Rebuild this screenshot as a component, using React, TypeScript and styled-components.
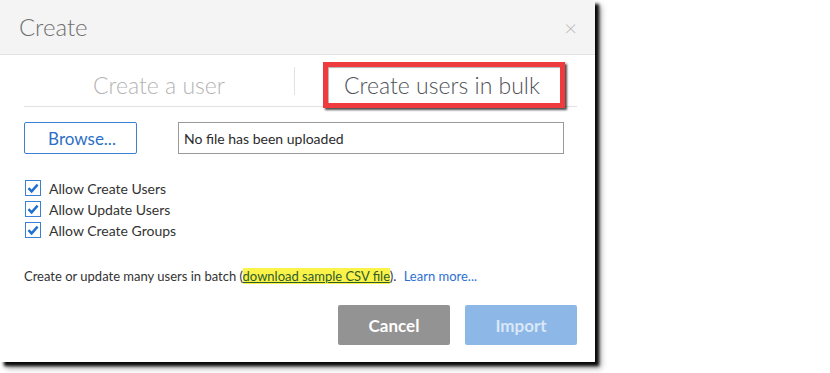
import React from "react";
import styled, { createGlobalStyle } from "styled-components";

const options = ["Allow Create Users", "Allow Update Users", "Allow Create Groups"];

const Check = () => (
  <svg width="16" height="16" viewBox="0 0 16 16">
    <rect x="0.5" y="0.5" width="15" height="15" fill="#fff" stroke="#3b7fd4" />
    <path d="M3.5 8.2 L6.6 11.4 L12.6 4.6" fill="none" stroke="#1f6fd0" strokeWidth="2.4" />
  </svg>
);

const App = () => {
  return (
    <Page>
      <GlobalStyle />
      <Dialog>
        <Header>
          <Title>Create</Title>
          <Close>×</Close>
        </Header>
        <Tabs>
          <Tab>Create a user</Tab>
          <Divider />
          <Tab active>
            Create users in bulk
            <Marker />
          </Tab>
        </Tabs>
        <Body>
          <UploadRow>
            <BrowseButton>Browse...</BrowseButton>
            <FileField>No file has been uploaded</FileField>
          </UploadRow>
          <CheckList>
            {options.map((o) => (
              <CheckRow key={o}>
                <Check />
                <span>{o}</span>
              </CheckRow>
            ))}
          </CheckList>
          <Note>
            Create or update many users in batch (<Highlight>download sample CSV file</Highlight>).{" "}
            <Link>Learn more...</Link>
          </Note>
          <Actions>
            <CancelButton>Cancel</CancelButton>
            <ImportButton>Import</ImportButton>
          </Actions>
        </Body>
      </Dialog>
    </Page>
  );
};

const GlobalStyle = createGlobalStyle`
  body {
    margin: 0;
    background: #fff;
    font-family: "Lato", "Open Sans", sans-serif;
  }
`;

const Page = styled.div`
  width: 830px;
  height: 373px;
  background: #fff;
`;

const Dialog = styled.div`
  width: 595px;
  height: 362px;
  background: #fff;
  box-shadow: 4px 4px 3px rgba(0, 0, 0, 0.95), 6px 6px 6px rgba(0, 0, 0, 0.35);
  display: flex;
  flex-direction: column;
`;

const Header = styled.div`
  height: 54px;
  background: #f4f4f4;
  border-bottom: 1px solid #e3e3e3;
  display: flex;
  align-items: center;
  justify-content: space-between;
  padding: 0 18px 0 19px;
`;

const Title = styled.div`
  font-size: 24px;
  font-weight: 300;
  color: #6f6f6f;
  padding-bottom: 1px;
`;

const Close = styled.div`
  font-size: 22px;
  font-weight: 300;
  color: #b9b9b9;
`;

const Tabs = styled.div`
  margin: 0 18px 0 24px;
  height: 51px;
  border-bottom: 1px solid #e2e2e2;
  display: grid;
  grid-template-columns: 270px 1px 1fr;
  align-items: center;
`;

const Tab = styled.div<{ active?: boolean }>`
  position: relative;
  text-align: center;
  font-size: 23px;
  font-weight: 300;
  color: ${(p) => (p.active ? "#4f5157" : "#b4b4b4")};
  padding-left: ${(p) => (p.active ? "12px" : "0")};
  padding-top: 8px;
`;

const Divider = styled.div`
  height: 28px;
  background: #e2e2e2;
`;

const Marker = styled.span`
  position: absolute;
  left: 28px;
  top: -1px;
  width: 232px;
  height: 36px;
  border: 5px solid #ef3b3e;
  box-shadow: 2px 2px 2px rgba(0, 0, 0, 0.7), inset 1px 1px 1px rgba(0, 0, 0, 0.3);
`;

const Body = styled.div`
  padding: 15px 18px 0 24px;
  display: flex;
  flex-direction: column;
`;

const UploadRow = styled.div`
  display: flex;
  align-items: center;
  gap: 41px;
`;

const BrowseButton = styled.button`
  width: 113px;
  height: 32px;
  background: #fff;
  border: 1px solid #3b80d6;
  border-radius: 2px;
  color: #2d6fc6;
  font-family: inherit;
  font-size: 17px;
  padding: 0 0 0 3px;
`;

const FileField = styled.div`
  width: 386px;
  height: 32px;
  box-sizing: border-box;
  border: 1px solid #9a9a9a;
  display: flex;
  align-items: center;
  padding-left: 5px;
  font-size: 14px;
  color: #2b2b2b;
`;

const CheckList = styled.div`
  margin-top: 26px;
  display: flex;
  flex-direction: column;
  gap: 5px;
`;

const CheckRow = styled.div`
  display: flex;
  align-items: center;
  gap: 8px;
  font-size: 14px;
  color: #333;
  height: 16px;
  padding-left: 1px;
`;

const Note = styled.div`
  margin-top: 30px;
  font-size: 13px;
  color: #333;
  white-space: nowrap;
`;

const Highlight = styled.span`
  background: #fbf24a;
  color: #2e5d2c;
  text-decoration: underline;
`;

const Link = styled.span`
  color: #2d6fd2;
  margin-left: 4px;
`;

const Actions = styled.div`
  margin-top: 21px;
  display: flex;
  justify-content: flex-end;
  gap: 15px;
`;

const CancelButton = styled.button`
  width: 112px;
  height: 40px;
  border: none;
  border-radius: 2px;
  background: #939393;
  color: #fff;
  font-family: inherit;
  font-size: 17px;
  font-weight: 700;
`;

const ImportButton = styled(CancelButton)`
  background: #8db7e6;
  color: #d9e7f7;
`;

export default App;
